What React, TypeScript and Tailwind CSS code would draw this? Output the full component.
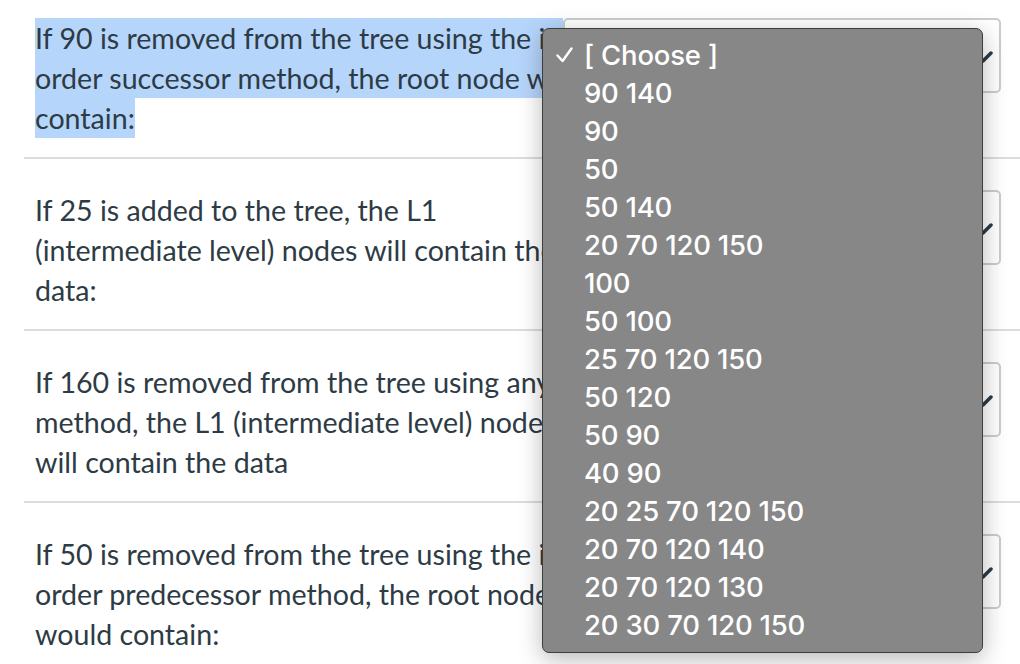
type Row = {
  lines: string[]
  highlight?: boolean
}

const rows: Row[] = [
  {
    lines: [
      "If 90 is removed from the tree using the in-",
      "order successor method, the root node will",
      "contain:",
    ],
    highlight: true,
  },
  {
    lines: [
      "If 25 is added to the tree, the L1",
      "(intermediate level) nodes will contain the",
      "data:",
    ],
  },
  {
    lines: [
      "If 160 is removed from the tree using any",
      "method, the L1 (intermediate level) nodes",
      "will contain the data",
    ],
  },
  {
    lines: [
      "If 50 is removed from the tree using the in-",
      "order predecessor method, the root node",
      "would contain:",
    ],
  },
]

const options = [
  "90 140",
  "90",
  "50",
  "50 140",
  "20 70 120 150",
  "100",
  "50 100",
  "25 70 120 150",
  "50 120",
  "50 90",
  "40 90",
  "20 25 70 120 150",
  "20 70 120 140",
  "20 70 120 130",
  "20 30 70 120 150",
]

function QuestionRow({ row, first }: { row: Row; first: boolean }) {
  return (
    <div className={`ml-[24px] flex ${first ? "pt-[18px]" : "pt-[31px] border-t-2 border-[#dcdcdc]"} pb-[19px]`}>
      <div className="w-[539px] pl-[11px] overflow-hidden text-[28.6px] leading-[40px] text-[#2d3b45]" style={{ fontFamily: "Lato, 'Open Sans', sans-serif" }}>
        {row.lines.map((l, i) => {
          if (row.highlight) {
            const full = i < row.lines.length - 1
            return (
              <div key={i} className={`${full ? "block" : "w-fit"} h-[40px] whitespace-nowrap bg-[#b6d5fb]`}>
                {l}
              </div>
            )
          }
          return (
            <div key={i} className="h-[40px] whitespace-nowrap">
              {l}
            </div>
          )
        })}
      </div>
      <div className="w-[438px] h-[75px] rounded-[5px] border-2 border-[#c7cdd1] bg-white flex items-center justify-end pr-[6px]">
        <svg width="20" height="12" viewBox="0 0 20 12" className="mt-[3px]">
          <polyline points="2,2 10,10 18,2" fill="none" stroke="#2d3b45" strokeWidth="3.5" strokeLinecap="round" strokeLinejoin="round" />
        </svg>
      </div>
    </div>
  )
}

export default function App() {
  return (
    <div className="relative w-[1020px] h-[664px] bg-white overflow-hidden">
      {rows.map((r, i) => (
        <QuestionRow key={i} row={r} first={i === 0} />
      ))}

      {/* open select menu */}
      <div
        className="absolute left-[542px] top-[28px] w-[441px] h-[625px] rounded-[7px] border border-[#3e3e3e] bg-[#878787] shadow-[0_6px_24px_rgba(0,0,0,0.28)] pt-[7px] text-white text-[27.5px] font-medium tracking-[-0.2px]"
        style={{ fontFamily: "Inter, 'Noto Sans', sans-serif" }}
      >
        <div className="flex items-center h-[38px] leading-[38px]">
          <span className="w-[41px] pl-[13px] flex items-center">
            <svg width="17" height="16" viewBox="0 0 17 16">
              <polyline points="1.5,8.5 6.5,14 15.5,1.5" fill="none" stroke="white" strokeWidth="2.4" strokeLinecap="round" strokeLinejoin="round" />
            </svg>
          </span>
          <span>[ Choose ]</span>
        </div>
        {options.map((o, i) => (
          <div key={i} className="h-[38px] leading-[38px] pl-[41px] whitespace-nowrap">
            {o}
          </div>
        ))}
      </div>
    </div>
  )
}
